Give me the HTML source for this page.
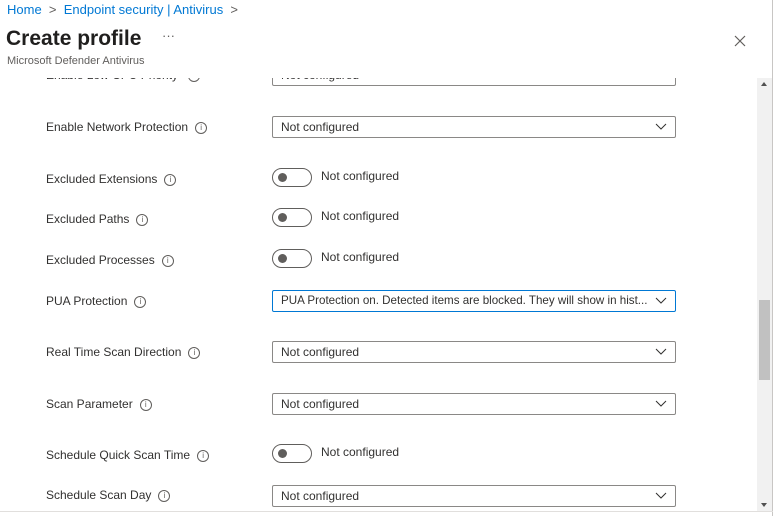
<!DOCTYPE html>
<html><head><style>
body{margin:0;width:774px;height:516px;overflow:hidden;background:#fff;font-family:"Segoe UI","Liberation Sans",sans-serif;color:#323130;position:relative}
.a{position:absolute;white-space:nowrap}
.lbl{font-size:12px;left:46px}
.info{display:inline-block;width:10px;height:10px;border:1px solid #605e5c;border-radius:50%;font-size:8px;line-height:10px;text-align:center;margin-left:7px;vertical-align:1px;color:#605e5c}
.dd{position:absolute;left:272px;height:20px;border:1px solid #8a8886;border-radius:2px;font-size:12px;line-height:20px;padding-left:8px;box-sizing:content-box;width:394px;overflow:hidden}
.dd span{display:inline-block;max-width:368px;overflow:hidden}
.dd svg{position:absolute;right:8px;top:6px;background:#fff}
.tg{position:absolute;left:272px;width:40px;height:19px;border:1px solid #605e5c;border-radius:10px;box-sizing:border-box}
.tg:after{content:"";position:absolute;left:5px;top:4px;width:9px;height:9px;border-radius:50%;background:#605e5c}
.tt{left:321px;font-size:12px}
</style></head><body>
<div class="a" style="left:7px;top:2px;font-size:13px;color:#0078d4">Home <span style="color:#605e5c">&nbsp;&gt;&nbsp;</span> Endpoint security | Antivirus <span style="color:#605e5c">&nbsp;&gt;</span></div>
<div class="a" style="left:6px;top:27px;font-size:21px;font-weight:600;color:#201f1e">Create profile</div>
<div class="a" style="left:162px;top:28px;font-size:13px;color:#605e5c">···</div>
<div class="a" style="left:7px;top:55px;font-size:11px;color:#605e5c">Microsoft Defender Antivirus</div>
<svg class="a" style="left:734px;top:35px" width="12" height="12"><path d="M1 1L11 11M11 1L1 11" stroke="#605e5c" stroke-width="1.2"/></svg>
<div class="a" style="left:0;top:78px;width:757px;height:433px;overflow:hidden">
 <div style="position:relative;top:-78px">
 <div class="a lbl" style="top:68px">Enable Low CPU Priority <span class="info">i</span></div>
 <div class="dd" style="top:64px">Not configured</div>
 </div>
</div>
<div class="a lbl" style="top:120px">Enable Network Protection<span class="info">i</span></div>
<div class="dd" style="top:116px">Not configured<svg width="12" height="8"><path d="M1 1L6 6L11 1" fill="none" stroke="#323130"/></svg></div>
<div class="a lbl" style="top:172px">Excluded Extensions<span class="info">i</span></div>
<div class="tg" style="top:168px"></div><div class="a tt" style="top:169px">Not configured</div>
<div class="a lbl" style="top:212px">Excluded Paths<span class="info">i</span></div>
<div class="tg" style="top:208px"></div><div class="a tt" style="top:209px">Not configured</div>
<div class="a lbl" style="top:253px">Excluded Processes<span class="info">i</span></div>
<div class="tg" style="top:249px"></div><div class="a tt" style="top:250px">Not configured</div>
<div class="a lbl" style="top:294px">PUA Protection<span class="info">i</span></div>
<div class="dd" style="top:290px;border-color:#0078d4"><span style="font-size:11.6px">PUA Protection on. Detected items are blocked. They will show in hist...</span><svg width="12" height="8"><path d="M1 1L6 6L11 1" fill="none" stroke="#323130"/></svg></div>
<div class="a lbl" style="top:345px">Real Time Scan Direction<span class="info">i</span></div>
<div class="dd" style="top:341px">Not configured<svg width="12" height="8"><path d="M1 1L6 6L11 1" fill="none" stroke="#323130"/></svg></div>
<div class="a lbl" style="top:397px">Scan Parameter<span class="info">i</span></div>
<div class="dd" style="top:393px">Not configured<svg width="12" height="8"><path d="M1 1L6 6L11 1" fill="none" stroke="#323130"/></svg></div>
<div class="a lbl" style="top:448px">Schedule Quick Scan Time<span class="info">i</span></div>
<div class="tg" style="top:444px"></div><div class="a tt" style="top:445px">Not configured</div>
<div class="a lbl" style="top:488px">Schedule Scan Day<span class="info">i</span></div>
<div class="dd" style="top:485px">Not configured<svg width="12" height="8"><path d="M1 1L6 6L11 1" fill="none" stroke="#323130"/></svg></div>
<div class="a" style="left:757px;top:78px;width:15px;height:433px;background:#f1f1f1"></div>
<div class="a" style="left:759px;top:300px;width:11px;height:80px;background:#c1c1c1"></div>
<div class="a" style="left:761px;top:82px;width:0;height:0;border:3px solid transparent;border-bottom:4px solid #505050;border-top:0"></div>
<div class="a" style="left:761px;top:503px;width:0;height:0;border:3px solid transparent;border-top:4px solid #505050;border-bottom:0"></div>
<div class="a" style="left:772px;top:0;width:1px;height:516px;background:#c8c6c4"></div>
<div class="a" style="left:0;top:511px;width:773px;height:1px;background:#e1dfdd"></div>
</body></html>
